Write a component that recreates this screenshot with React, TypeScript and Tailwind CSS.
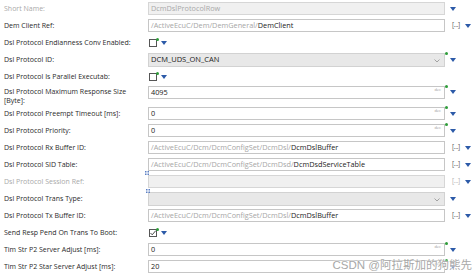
import React from "react";

type Trail = "none" | "arrow" | "ref" | "refDisabled" | "num" | "selectDot";

type RowDef = {
  label: React.ReactNode;
  disabled?: boolean;
  tall?: boolean;
  field: React.ReactNode;
  trail: Trail;
};

const labelFont = "font-['Open_Sans','Noto_Sans',sans-serif]";

function Arrow() {
  return (
    <svg width="6" height="4" viewBox="0 0 6 4" className="shrink-0">
      <polygon points="0,0 6,0 3,4" fill="#2c5aa8" />
    </svg>
  );
}

function GreenDot() {
  return <span className="absolute -top-[2px] right-[-4px] h-[3px] w-[3px] rounded-full bg-[#2e9d3a]" />;
}

function TextBox({
  children,
  disabled,
  dec,
}: {
  children?: React.ReactNode;
  disabled?: boolean;
  dec?: boolean;
}) {
  return (
    <div
      className={`relative flex h-[13px] w-full items-center border px-[2px] text-[7.3px] leading-none ${
        disabled ? "border-[#d6d6d6] bg-[#f0f0f0] text-[#a8a8a8]" : "border-[#c6c6c6] bg-white text-[#222]"
      }`}
    >
      <span className="whitespace-nowrap">{children}</span>
      {dec && (
        <>
          <span className="absolute right-[3px] top-[1px] text-[4px] text-[#9a9a9a]">dec</span>
          <GreenDot />
        </>
      )}
    </div>
  );
}

function RefBox({ prefix, name }: { prefix: string; name: string }) {
  return (
    <TextBox>
      <span className="text-[#a6a6a6]">{prefix}</span>
      <span className="text-[#222]">{name}</span>
    </TextBox>
  );
}

function SelectBox({ value, dot, badge }: { value?: string; dot?: boolean; badge?: boolean }) {
  return (
    <div className="relative flex h-[14px] w-full items-center border border-[#d2d2d2] bg-[#e8e8e8] px-[2px] text-[7.5px] leading-none text-[#222]">
      <span className="whitespace-nowrap">{value}</span>
      <svg width="6" height="4" viewBox="0 0 6 4" className="absolute right-[4px] top-[5px]">
        <polyline points="0.5,0.5 3,3 5.5,0.5" fill="none" stroke="#9a9a9a" strokeWidth="0.9" />
      </svg>
      {dot && <GreenDot />}
      {badge && <Badge />}
    </div>
  );
}

function Badge() {
  return (
    <svg width="4" height="4" viewBox="0 0 4 4" className="absolute -left-[3px] -top-[4px]">
      <rect x="0" y="0" width="1.5" height="1.5" fill="#5b7fc4" />
      <rect x="2.5" y="0" width="1.5" height="1.5" fill="#5b7fc4" />
      <rect x="0" y="2.5" width="1.5" height="1.5" fill="#5b7fc4" />
      <rect x="2.5" y="2.5" width="1.5" height="1.5" fill="#5b7fc4" />
    </svg>
  );
}

function Check({ checked }: { checked?: boolean }) {
  return (
    <div className="flex items-center pl-[1px]">
      <div className="relative h-[8px] w-[8px] border border-[#555] bg-white">
        {checked && (
          <svg width="8" height="8" viewBox="0 0 8 8" className="absolute -left-[1px] -top-[1px]">
            <polyline points="1.5,4 3.2,5.8 6.8,1.6" fill="none" stroke="#333" strokeWidth="0.9" />
          </svg>
        )}
        <span className="absolute -right-[3px] -top-[2px] h-[3px] w-[3px] rounded-full bg-[#2e9d3a]" />
      </div>
      <div className="ml-[4px]">
        <Arrow />
      </div>
    </div>
  );
}

function Trailing({ kind }: { kind: Trail }) {
  if (kind === "none") return null;
  if (kind === "ref" || kind === "refDisabled") {
    return (
      <div className="flex items-center pl-[7px]">
        <span
          className={`text-[6.5px] leading-none tracking-[-0.3px] ${
            kind === "ref" ? "text-[#555]" : "text-[#b0b0b0]"
          }`}
        >
          [...]
        </span>
        <div className="ml-[5px]">
          <Arrow />
        </div>
      </div>
    );
  }
  return (
    <div className="flex items-center pl-[5px]">
      <Arrow />
    </div>
  );
}

const rows: RowDef[] = [
  {
    label: "Short Name:",
    disabled: true,
    field: <TextBox disabled>DcmDslProtocolRow</TextBox>,
    trail: "arrow",
  },
  {
    label: "Dem Client Ref:",
    field: <RefBox prefix="/ActiveEcuC/Dem/DemGeneral/" name="DemClient" />,
    trail: "ref",
  },
  { label: "Dsl Protocol Endianness Conv Enabled:", field: <Check />, trail: "none" },
  { label: "Dsl Protocol ID:", field: <SelectBox value="DCM_UDS_ON_CAN" dot />, trail: "arrow" },
  { label: "Dsl Protocol Is Parallel Executab:", field: <Check />, trail: "none" },
  {
    label: (
      <>
        Dsl Protocol Maximum Response Size
        <br />
        [Byte]:
      </>
    ),
    tall: true,
    field: <TextBox dec>4095</TextBox>,
    trail: "num",
  },
  { label: "Dsl Protocol Preempt Timeout [ms]:", field: <TextBox dec>0</TextBox>, trail: "num" },
  { label: "Dsl Protocol Priority:", field: <TextBox dec>0</TextBox>, trail: "num" },
  {
    label: "Dsl Protocol Rx Buffer ID:",
    field: <RefBox prefix="/ActiveEcuC/Dcm/DcmConfigSet/DcmDsl/" name="DcmDslBuffer" />,
    trail: "ref",
  },
  {
    label: "Dsl Protocol SID Table:",
    field: <RefBox prefix="/ActiveEcuC/Dcm/DcmConfigSet/DcmDsd/" name="DcmDsdServiceTable" />,
    trail: "ref",
  },
  {
    label: "Dsl Protocol Session Ref:",
    disabled: true,
    field: (
      <div className="relative">
        <TextBox disabled />
        <Badge />
      </div>
    ),
    trail: "refDisabled",
  },
  { label: "Dsl Protocol Trans Type:", field: <SelectBox badge />, trail: "arrow" },
  {
    label: "Dsl Protocol Tx Buffer ID:",
    field: <RefBox prefix="/ActiveEcuC/Dcm/DcmConfigSet/DcmDsl/" name="DcmDslBuffer" />,
    trail: "ref",
  },
  { label: "Send Resp Pend On Trans To Boot:", field: <Check checked />, trail: "none" },
  { label: "Tim Str P2 Server Adjust [ms]:", field: <TextBox dec>0</TextBox>, trail: "num" },
  { label: "Tim Str P2 Star Server Adjust [ms]:", field: <TextBox dec>20</TextBox>, trail: "num" },
];

export default function App() {
  return (
    <div className={`relative h-[275px] w-[474px] overflow-hidden bg-white ${labelFont}`}>
      <div className="flex flex-col">
        {rows.map((row, i) => (
          <div key={i} className={`flex items-center ${row.tall ? "h-[20px]" : "h-[17px]"}`}>
            <div
              className={`w-[148px] shrink-0 pl-[4px] text-[7px] leading-[9px] ${
                row.disabled ? "text-[#a9a9a9]" : "text-[#2a2a2a]"
              } ${row.tall ? "self-start pt-[2px]" : ""}`}
            >
              {row.label}
            </div>
            <div className={`relative w-[297px] shrink-0 ${row.tall ? "self-start pt-[1px]" : ""}`}>
              {row.field}
            </div>
            <div className={`flex w-[29px] shrink-0 ${row.tall ? "self-start pt-[5px]" : ""}`}>
              <Trailing kind={row.trail} />
            </div>
          </div>
        ))}
      </div>
      <div className="pointer-events-none absolute bottom-[4px] right-[2px] font-['Liberation_Sans','Noto_Sans_CJK_SC',sans-serif] text-[11.5px] leading-none text-[#a8a8a8] [text-shadow:0_0_2px_#fff,0_0_2px_#fff]">
        CSDN @阿拉斯加的狗熊先
      </div>
    </div>
  );
}
